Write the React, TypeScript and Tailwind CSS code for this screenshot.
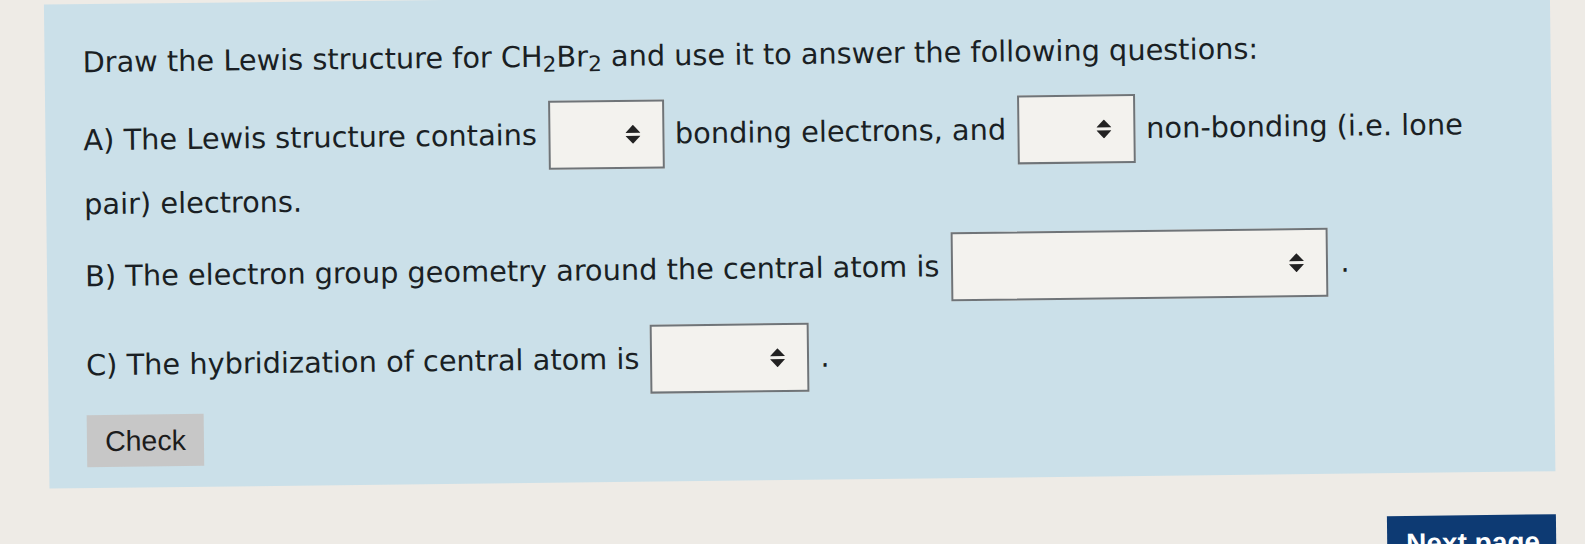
import React from 'react';

function Arrows() {
  return (
    <svg width="15" height="19" viewBox="0 0 15 19" className="shrink-0">
      <polygon points="0,8 7.5,0 15,8" fill="#222" />
      <polygon points="0,11 15,11 7.5,19" fill="#222" />
    </svg>
  );
}

function Select({ w }: { w: string }) {
  return (
    <div
      className={`${w} h-[69px] shrink-0 bg-[#f3f2ee] border-2 border-[#6f7478] flex items-center justify-end pr-[22px]`}
    >
      <Arrows />
    </div>
  );
}

export default function App() {
  return (
    <div className="w-[1585px] h-[544px] overflow-hidden bg-[#eeebe6]">
      <div
        className="w-[1585px] h-[544px] pl-[47px] pr-[32px] rotate-[-0.66deg] text-[#1a1f24] text-[28.8px] leading-none"
        style={{ fontFamily: '"DejaVu Sans", Verdana, sans-serif' }}
      >
        <div className="-mt-1 bg-[#cbe0e9] pl-[38px] pt-[38px] pb-[21px]">
          <div className="h-[40px] flex items-center whitespace-nowrap">
            <span>
              Draw the Lewis structure for CH<sub>2</sub>Br<sub>2</sub> and use it to answer the
              following questions:
            </span>
          </div>

          <div className="mt-[23px] h-[70px] flex items-center gap-[11px] whitespace-nowrap">
            <span>A) The Lewis structure contains</span>
            <Select w="w-[116px]" />
            <span>bonding electrons, and</span>
            <Select w="w-[118px]" />
            <span>non-bonding (i.e. lone</span>
          </div>

          <div className="mt-[9px] h-[40px] flex items-center">
            <span>pair) electrons.</span>
          </div>

          <div className="mt-[17px] h-[70px] flex items-center gap-[12px] whitespace-nowrap">
            <span>B) The electron group geometry around the central atom is</span>
            <Select w="w-[377px]" />
            <span>.</span>
          </div>

          <div className="mt-[19px] h-[70px] flex items-center gap-[11px] whitespace-nowrap">
            <span>C) The hybridization of central atom is</span>
            <Select w="w-[159px]" />
            <span>.</span>
          </div>

          <div className="mt-[15px] flex">
            <button
              className="w-[117px] h-[52px] bg-[#c7c7c7] text-[#1c1c1c] text-[28.5px] flex items-center justify-center"
              style={{ fontFamily: '"Liberation Sans", Arial, sans-serif' }}
            >
              Check
            </button>
          </div>
        </div>

        <div className="mt-[43px] flex justify-end">
          <div
            className="w-[169px] h-[60px] bg-[#0d3a73] text-white font-bold text-[28px] pl-[19px] pt-[14px] whitespace-nowrap"
            style={{ fontFamily: '"Liberation Sans", Arial, sans-serif' }}
          >
            Next page
          </div>
        </div>
      </div>
    </div>
  );
}
